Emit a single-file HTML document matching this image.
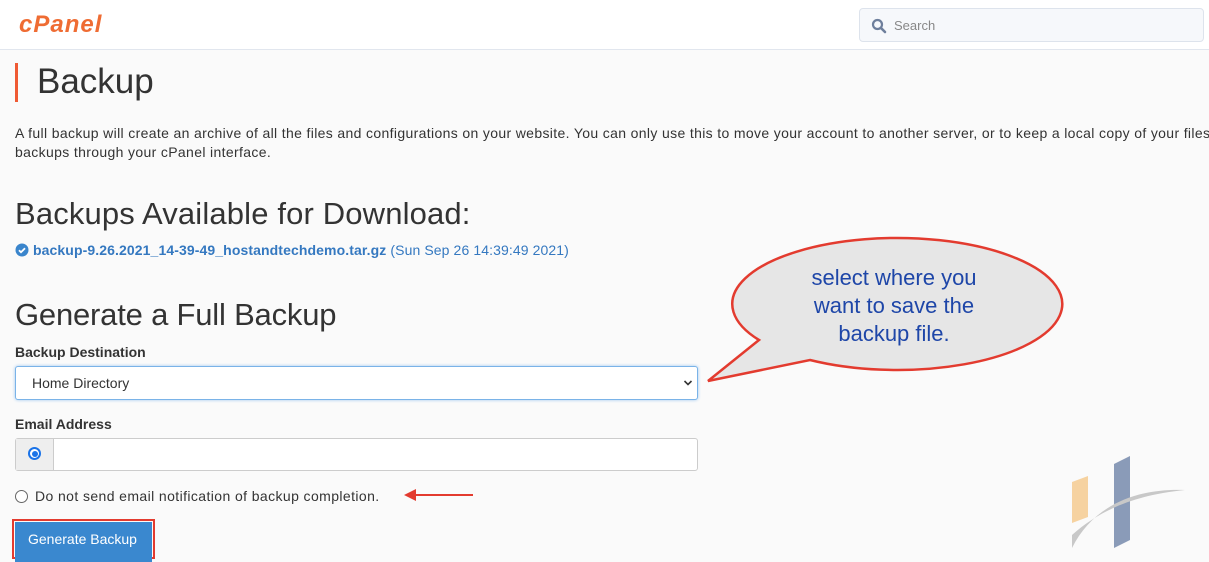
<!DOCTYPE html>
<html><head><style>
*{margin:0;padding:0;box-sizing:border-box}
body{width:1209px;height:553px;overflow:hidden;background:#fafafa;font-family:"Liberation Sans",sans-serif;color:#333;position:relative}
.hdr{position:absolute;left:0;top:0;width:1209px;height:50px;background:#fff;border-bottom:1px solid #e1e6ee}
.logo{position:absolute;left:19px;top:11px;font-size:24px;font-weight:bold;font-style:italic;color:#ef6c33;letter-spacing:1px}
.search{position:absolute;left:859px;top:8px;width:345px;height:34px;background:#f6f8fb;border:1px solid #dde3ec;border-radius:4px}
.search span{position:absolute;left:34px;top:9px;font-size:13px;color:#888}
.t{position:absolute;white-space:nowrap}
</style></head><body>
<div class="hdr">
<div class="logo">cPanel</div>
<div class="search"><svg style="position:absolute;left:11px;top:9px" width="16" height="16" viewBox="0 0 16 16"><circle cx="6.5" cy="6.5" r="4.5" fill="none" stroke="#6e7f9c" stroke-width="2.2"/><path d="M10 10l4 4" stroke="#6e7f9c" stroke-width="2.6" stroke-linecap="round"/></svg><span>Search</span></div>
</div>
<div style="position:absolute;left:15px;top:63px;width:3px;height:39px;background:#ef5a34"></div>
<div class="t" style="left:37px;top:62px;font-size:35px;color:#333">Backup</div>
<div class="t" style="left:15px;top:124px;font-size:14px;line-height:19px;letter-spacing:0.35px;color:#333">A full backup will create an archive of all the files and configurations on your website. You can only use this to move your account to another server, or to keep a local copy of your files.<br>backups through your cPanel interface.</div>
<div class="t" style="left:15px;top:196px;font-size:31px;letter-spacing:0.15px;color:#333">Backups Available for Download:</div>
<svg style="position:absolute;left:15px;top:243px" width="14" height="14" viewBox="0 0 14 14"><circle cx="7" cy="7" r="6.5" fill="#3a85cc"/><path d="M4 7.2l2 2 4-4" stroke="#fff" stroke-width="1.8" fill="none"/></svg>
<div class="t" style="left:33px;top:242px;font-size:14px;letter-spacing:0.1px;color:#3478c0"><b>backup-9.26.2021_14-39-49_hostandtechdemo.tar.gz</b> (Sun Sep 26 14:39:49 2021)</div>
<div class="t" style="left:15px;top:297px;font-size:31px;letter-spacing:-0.2px;color:#333">Generate a Full Backup</div>
<div class="t" style="left:15px;top:344px;font-size:14px;font-weight:bold;color:#333">Backup Destination</div>
<div style="position:absolute;left:15px;top:366px;width:683px;height:34px;background:#fff;border:1px solid #7ab3e8;border-radius:3px;box-shadow:0 0 3px #9cc6ef"><span class="t" style="left:16px;top:8px;font-size:14px;color:#333">Home Directory</span><svg style="position:absolute;right:4px;top:12px" width="10" height="8" viewBox="0 0 10 8"><path d="M1.5 2l3.5 3.5 3.5-3.5" stroke="#333" stroke-width="1.6" fill="none"/></svg></div>
<div class="t" style="left:15px;top:416px;font-size:14px;font-weight:bold;color:#333">Email Address</div>
<div style="position:absolute;left:15px;top:438px;width:683px;height:33px;background:#fff;border:1px solid #ccc;border-radius:3px"><div style="position:absolute;left:0;top:0;width:38px;height:31px;background:#eee;border-right:1px solid #ccc"></div><div style="position:absolute;left:12px;top:8px;width:13px;height:13px;border-radius:50%;border:2px solid #1a73e8;background:#fff"><div style="margin:1.5px;width:6px;height:6px;border-radius:50%;background:#1a73e8"></div></div></div>
<div style="position:absolute;left:15px;top:490px;width:13px;height:13px;border-radius:50%;border:1px solid #666;background:#fff"></div>
<div class="t" style="left:35px;top:488px;font-size:14px;letter-spacing:0.4px;color:#333">Do not send email notification of backup completion.</div>
<svg style="position:absolute;left:400px;top:487px" width="76" height="16"><path d="M73 8H12" stroke="#e33b2f" stroke-width="2"/><path d="M4 8l12-6v12z" fill="#e33b2f"/></svg>
<div style="position:absolute;left:12px;top:519px;width:143px;height:40px;border:2px solid #e33b2f"></div>
<div style="position:absolute;left:15px;top:522px;width:137px;height:40px;background:#3a88cf"></div>
<div class="t" style="left:28px;top:531px;font-size:14px;color:#fff">Generate Backup</div>
<svg style="position:absolute;left:0;top:0" width="1209" height="553">
<path d="M759 340 A165 66 0 1 1 810 360 L708 381 Z" fill="#e6e6e6" stroke="#e33b2f" stroke-width="2.5" stroke-linejoin="miter"/>
<g font-size="22" fill="#1e46a8" text-anchor="middle" font-family="Liberation Sans">
<text x="894" y="285">select where you</text>
<text x="894" y="313">want to save the</text>
<text x="894" y="341">backup file.</text>
</g>
<path d="M1072 482l16-6v41l-16 6z" fill="#f5c88a" opacity=".8"/>
<path d="M1114 464l16-8v84l-16 8z" fill="#8a9bb8"/>
<path d="M1072 548c20-40 60-60 113-58c-50 5-85 20-113 45z" fill="#c8c8c8"/>
</svg>
</body></html>
